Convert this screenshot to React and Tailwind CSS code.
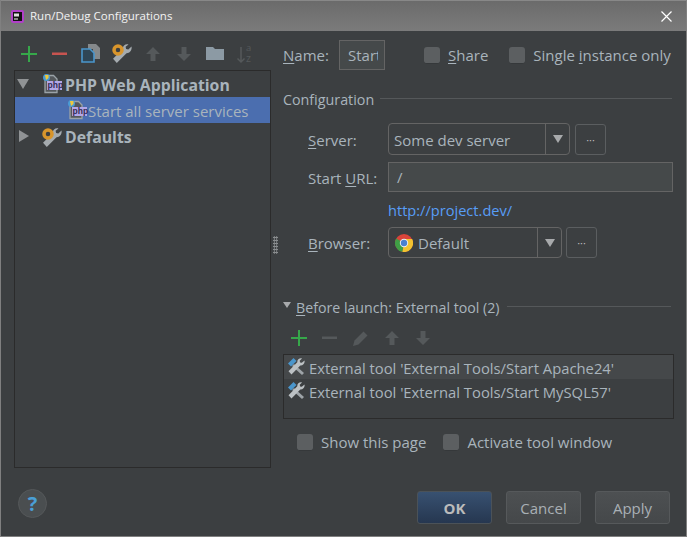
const PhpIcon = ({ className = "" }) => (
  <svg width="19" height="20" viewBox="0 0 19 20" className={`shrink-0 overflow-visible ${className}`}>
    <path d="M2 1.500h8.500l3.500 3.500v13.500H2z" fill="#55595c" stroke="#9aa2a7" strokeWidth="1.300" />
    <rect x="4" y="7" width="15" height="9" fill="#b3a7e8" />
    <text x="4.600" y="14" fontSize="8.500" fontWeight="700" fill="#332c55" fontFamily="Liberation Sans, sans-serif">php</text>
    <circle cx="3.500" cy="3.500" r="3.500" fill="#4a9bd4" />
    <path d="M2 1h3.500v3L3 6z" fill="#f0c93a" />
  </svg>
);

const Wrench = () => (
  <svg width="20" height="20" viewBox="0 0 20 20" className="shrink-0">
    <path d="M19.500 2.500l-3.200 3-2.200-.5-.5-2.200L16.500.5c-2.900-1-6 1.200-5.700 4.600L1 14.800l3.800 4.200 9.700-9.800c3.300.2 5.800-3.200 5-6.700z" fill="#a5abaf" />
    <circle cx="6" cy="6" r="4" fill="#3c3f41" stroke="#d8952c" strokeWidth="3.500" />
  </svg>
);

const ToolIcon = () => (
  <svg width="18" height="18" viewBox="0 0 18 18" className="shrink-0">
    <path d="M6 7l10 9" stroke="#9ea4a8" strokeWidth="3" />
    <path d="M1 5.500L6.500 0 9.500 3 4 8.500z" fill="#4a96cc" />
    <path d="M17.500 2.500l-2.700 2.300-1.700-.4-.4-1.700L15 .5c-2.400-.7-5 1.100-4.700 3.800L1.500 13.300l3 3.200 8.800-9c2.700.2 4.800-2.200 4.200-5z" fill="#bcc1c4" />
  </svg>
);

const Arrow = ({ dir }) => (
  <svg width="14" height="14" viewBox="0 0 14 14" className={dir === "down" ? "rotate-180" : ""}>
    <path d="M7 0l7 7H9.500v7h-5V7H0z" fill="#55595b" />
  </svg>
);

const Plus = () => (
  <svg width="16" height="16" viewBox="0 0 16 16">
    <path d="M7 0h2v7h7v2H9v7H7V9H0V7h7z" fill="#36a84a" />
  </svg>
);

const Minus = ({ color }) => (
  <svg width="15" height="16" viewBox="0 0 15 16">
    <rect x="0" y="6.500" width="15" height="2.500" fill={color} />
  </svg>
);

const Cell = ({ children }) => (
  <div className="w-[31px] flex items-center justify-center shrink-0">{children}</div>
);

const Check = ({ label, u, rest, pre = "" }) => (
  <label className="flex items-center gap-2 shrink-0 whitespace-nowrap">
    <span className="w-4 h-[17px] shrink-0 rounded-[3px] bg-[#5c5f61] border-b border-[#35383a]" />
    <span>
      {pre}
      {u && <span className="underline underline-offset-2">{u}</span>}
      {rest}
      {label}
    </span>
  </label>
);

const Ellipsis = ({ className = "" }) => (
  <div className={`w-[31px] shrink-0 border border-[#5b5e60] rounded-[3px] flex items-center justify-center text-[11px] leading-none text-[#bbbbbb] ${className}`}>
    ···
  </div>
);

const Combo = ({ width, children }) => (
  <div className={`${width} h-full shrink-0 border border-[#646464] rounded-[4px] flex items-center`}>
    <div className="flex-1 flex items-center min-w-0 pl-[5px] gap-[5px] pt-[1px]">{children}</div>
    <div className="w-6 h-full border-l border-[#646464] flex items-center justify-center">
      <svg width="10" height="8" viewBox="0 0 10 8"><path d="M0 0h10L5 8z" fill="#a8aaac" /></svg>
    </div>
  </div>
);

const Chrome = () => (
  <svg width="18" height="18" viewBox="0 0 18 18" className="shrink-0 ml-[1px] -mr-[1px]">
    <circle cx="9" cy="9" r="9" fill="#d9443a" />
    <path d="M9 9L1.200 4.500A9 9 0 0 0 7.500 17.900z" fill="#3f9e45" />
    <path d="M9 5h8.100A9 9 0 0 1 7.500 17.900L9 9z" fill="#f2c230" />
    <circle cx="9" cy="9" r="4.200" fill="#eeeeee" />
    <circle cx="9" cy="9" r="3.200" fill="#4a80d0" />
  </svg>
);

const Btn = ({ children, ok }) => (
  <button className={`w-[75px] h-[33px] rounded-[3px] border text-[15px] ${ok ? "border-[#4b5258] bg-gradient-to-b from-[#385171] to-[#263750] text-[#bbbbbb] font-bold" : "border-[#56595b] bg-gradient-to-b from-[#4d5052] to-[#45484a] text-[#a9b0b5]"}`}>
    {children}
  </button>
);

export default function App() {
  return (
    <div
      className="w-[687px] h-[537px] flex flex-col overflow-hidden border-x border-b border-[#808080] bg-[#3c3f41] text-[#a9b4bc] text-[15px] leading-5"
      style={{ fontFamily: '"Open Sans", "Noto Sans", sans-serif' }}
    >
      {/* title bar */}
      <div className="h-[31px] shrink-0 bg-gradient-to-b from-[#6b6b6b] to-[#7b7b7b] border-t border-[#888888] flex items-center pl-[10px] pr-[14px]">
        <svg width="13" height="13" viewBox="0 0 13 13" className="shrink-0">
          <rect width="13" height="13" rx="2" fill="#b040c8" />
          <rect x="2" y="2" width="9" height="9" fill="#111111" />
          <rect x="3" y="8.500" width="4" height="1" fill="#ffffff" />
          <rect x="3" y="3.500" width="5" height="3" fill="#dddddd" />
        </svg>
        <span className="ml-[6px] text-[11.500px] text-[#f2f2f2]">Run/Debug Configurations</span>
        <svg width="11" height="11" viewBox="0 0 11 11" className="ml-auto">
          <path d="M.5.5l10 10M10.500.5l-10 10" stroke="#ffffff" strokeWidth="1.200" />
        </svg>
      </div>

      {/* content */}
      <div className="h-[437px] shrink-0 flex">
        {/* left */}
        <div className="w-[257px] ml-[13px] shrink-0 flex flex-col">
          <div className="h-[39px] flex items-center -ml-[1px] pt-[6px]">
            <Cell><Plus /></Cell>
            <Cell><Minus color="#c75450" /></Cell>
            <Cell>
              <svg width="19" height="19" viewBox="0 0 19 19">
                <path d="M7 0h8l4 4v11h-7V5H7z" fill="#85898b" />
                <path d="M1 5h8l4 4v9H1z" fill="#2f4656" stroke="#4a96cc" strokeWidth="1.600" />
              </svg>
            </Cell>
            <Cell><Wrench /></Cell>
            <Cell><Arrow dir="up" /></Cell>
            <Cell><Arrow dir="down" /></Cell>
            <Cell><svg width="18" height="13" viewBox="0 0 18 13"><path d="M0 0h7l2 2h9v11H0z" fill="#8c9aa4" /></svg></Cell>
            <Cell>
              <svg width="17" height="19" viewBox="0 0 17 19" className="overflow-visible">
                <path d="M4 3v15M.5 14.500L4 18l3.500-3.500" fill="none" stroke="#55595b" strokeWidth="1.500" />
                <text x="9" y="7" fontSize="9.500" fill="#55595b" fontFamily="Open Sans, sans-serif">a</text>
                <text x="9" y="18" fontSize="10.500" fill="#55595b" fontFamily="Open Sans, sans-serif">z</text>
              </svg>
            </Cell>
          </div>
          <div className="h-[398px] border border-[#2b2b2b]">
            <div className="h-[26px] flex items-center font-bold text-[15.800px]">
              <svg width="12" height="10" viewBox="0 0 12 10" className="ml-[2px] shrink-0"><path d="M0 0h12L6 10z" fill="#909395" /></svg>
              <PhpIcon className="ml-[14px]" />
              <span className="ml-[3px] pt-[2px]">PHP Web Application</span>
            </div>
            <div className="h-[26px] flex items-center bg-[#4b6eaf]">
              <PhpIcon className="ml-[53px]" />
              <span className="ml-[1px] pt-[2px]">Start all server services</span>
            </div>
            <div className="h-[26px] flex items-center font-bold text-[15.800px]">
              <svg width="10" height="12" viewBox="0 0 10 12" className="ml-[4px] shrink-0"><path d="M0 0l10 6-10 6z" fill="#909395" /></svg>
              <span className="ml-[13px] mt-[3px]"><Wrench /></span>
              <span className="ml-[3px] pt-[2px]">Defaults</span>
            </div>
          </div>
        </div>

        {/* splitter */}
        <div className="w-[12px] shrink-0 flex items-center justify-center">
          <div className="w-[5px] h-[18px] mt-[-9px] -ml-[4px] bg-[radial-gradient(#8a8d8f_1px,transparent_1px)] bg-[length:2.500px_3px]" />
        </div>

        {/* right */}
        <div className="w-[391px] shrink-0 flex flex-col">
          <div className="h-[30px] mt-[9px] flex items-center">
            <span className="w-[56px] shrink-0"><span className="underline underline-offset-2">N</span>ame:</span>
            <div className="w-[46px] h-full shrink-0 border border-[#646464] bg-[#45494a] pl-2 pr-[6px] flex items-center">
              <span className="overflow-hidden">Start</span>
            </div>
            <div className="ml-[39px]"><Check u="S" rest="hare" /></div>
            <div className="ml-[21px]"><Check pre="Single " u="i" rest="nstance only" /></div>
          </div>
          <div className="mt-[20px] h-5 flex items-center">
            <span className="text-[14.300px]">Configuration</span>
            <div className="ml-[6px] flex-1 mr-[2px] h-px bg-[#55585a] -mt-1" />
          </div>
          <div className="mt-[13px] h-[32px] flex items-center">
            <span className="ml-[25px] w-[80px] shrink-0 pt-[1px]"><span className="underline underline-offset-2">S</span>erver:</span>
            <Combo width="w-[182px]">Some dev server</Combo>
            <Ellipsis className="ml-[5px] h-[31px]" />
          </div>
          <div className="mt-[7px] h-[30px] flex items-center">
            <span className="ml-[25px] w-[80px] shrink-0 pt-[1px]">Start <span className="underline underline-offset-2">U</span>RL:</span>
            <div className="w-[285px] h-full border border-[#646464] bg-[#45494a] pl-2 flex items-center">/</div>
          </div>
          <div className="mt-[7px] h-[22px] ml-[105px] flex items-center text-[#589df6] text-[14.600px]">http://project.dev/</div>
          <div className="mt-[6px] h-[31px] flex items-center">
            <span className="ml-[25px] w-[80px] shrink-0"><span className="underline underline-offset-2">B</span>rowser:</span>
            <Combo width="w-[174px]"><Chrome /><span className="ml-[1px]">Default</span></Combo>
            <Ellipsis className="ml-[4px] h-[31px]" />
          </div>
          <div className="mt-[39px] h-5 flex items-center whitespace-nowrap">
            <svg width="8" height="6" viewBox="0 0 8 6" className="shrink-0 -mt-[4px]"><path d="M0 0h8L4 6z" fill="#a8aaac" /></svg>
            <span className="ml-[5px] text-[14.200px] pt-[2px]"><span className="underline underline-offset-2">B</span>efore launch: External tool (2)</span>
            <div className="ml-[7px] flex-1 mr-[3px] h-px bg-[#55585a] -mt-[2px]" />
          </div>
          <div className="mt-[8px] h-[26px] flex items-center">
            <Cell><Plus /></Cell>
            <Cell><Minus color="#55595b" /></Cell>
            <Cell><svg width="15" height="15" viewBox="0 0 15 15"><path d="M0 15l1.500-5.500L10.500.5l4 4-9 9z" fill="#55595b" /></svg></Cell>
            <Cell><Arrow dir="up" /></Cell>
            <Cell><Arrow dir="down" /></Cell>
          </div>
          <div className="mt-[3px] h-[65px] border border-[#2b2b2b]">
            <div className="h-[24px] bg-[#45484a] flex items-center gap-[4px] pl-[3px] whitespace-nowrap text-[14.800px]"><ToolIcon /><span className="pt-[2px]">External tool 'External Tools/Start Apache24'</span></div>
            <div className="h-[24px] flex items-center gap-[4px] pl-[3px] whitespace-nowrap text-[14.800px]"><ToolIcon /><span className="pt-[2px]">External tool 'External Tools/Start MySQL57'</span></div>
          </div>
          <div className="mt-[13px] pl-[14px] flex gap-[17px]">
            <Check label="Show this page" />
            <Check label="Activate tool window" />
          </div>
        </div>
      </div>

      {/* footer */}
      <div className="flex-1 flex items-start pl-[17px] pr-[16px]">
        <div className="mt-[21px] w-[29px] h-[29px] rounded-full bg-[#4a4e50] border border-[#55585a] flex items-center justify-center text-[20px] font-bold text-[#4a9fd6]">?</div>
        <div className="ml-auto mt-[23px] flex gap-[14px]">
          <Btn ok>OK</Btn>
          <Btn>Cancel</Btn>
          <Btn>Apply</Btn>
        </div>
      </div>
    </div>
  );
}
